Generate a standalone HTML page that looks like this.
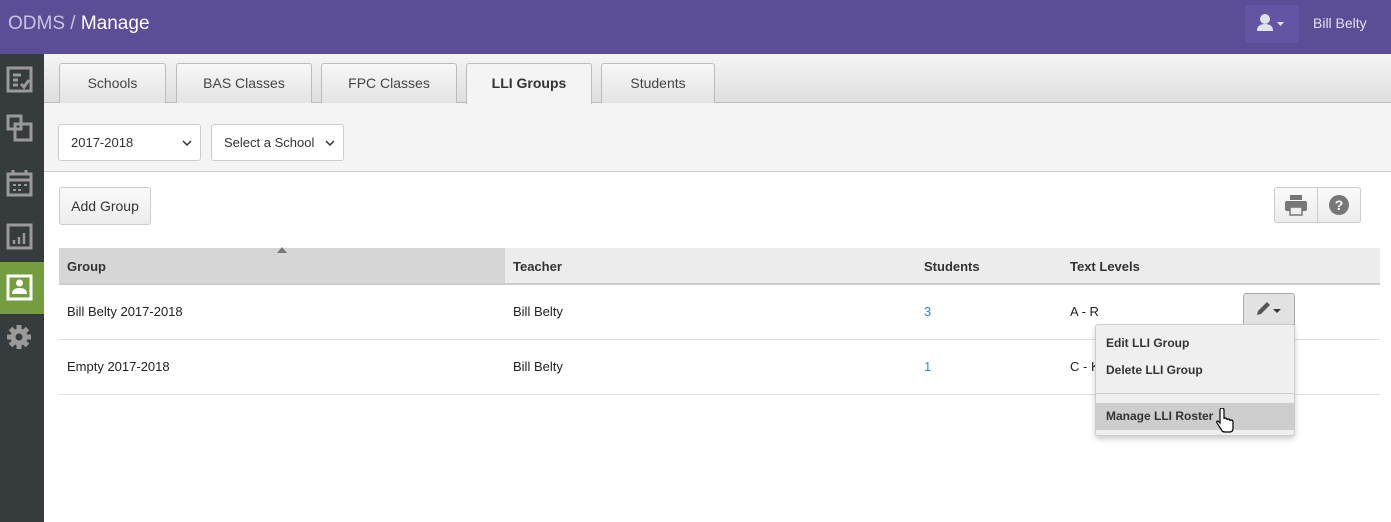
<!DOCTYPE html><html><head><style>
*{box-sizing:border-box;margin:0;padding:0}
body{width:1391px;height:522px;overflow:hidden;font-family:"Liberation Sans",sans-serif;font-size:13px;color:#222;background:#fff;position:relative}
.a{position:absolute}
.hdr{left:0;top:0;width:1391px;height:54px;background:#5b4d96}
.side{left:0;top:54px;width:44px;height:468px;background:#363b3e}
.tabbar{left:44px;top:54px;width:1347px;height:49px;background:linear-gradient(#f5f5f5,#dedede);border-bottom:1px solid #bbb}
.tab{top:63px;height:40px;border:1px solid #bbb;border-bottom:none;border-radius:3px 3px 0 0;background:linear-gradient(#f7f7f7,#e3e3e3);text-align:center;line-height:38px;font-size:14px;color:#444}
.filt{left:44px;top:103px;width:1347px;height:69px;background:#f4f4f4;border-bottom:1px solid #ccc}
.sel{top:124px;height:37px;border:1px solid #ccc;border-radius:3px;background:#fff;font-size:13px;line-height:35px;padding-left:12px;color:#333}
.chev{position:absolute;right:8px;top:14px}
.btn{border:1px solid #ccc;border-radius:3px;background:linear-gradient(#fafafa,#ececec)}
.th{top:248px;height:37px;font-weight:bold;line-height:36px;color:#333}
.td{line-height:20px}
</style></head><body>
<div class="a hdr"></div>
<div class="a" style="left:8px;top:13px;font-size:19px;color:#c9c3e0">ODMS / <span style="color:#fff">Manage</span></div>
<div class="a" style="left:1245px;top:5px;width:54px;height:38px;background:#6553a3;border-radius:3px"></div>
<svg class="a" style="left:1256px;top:13px" width="34" height="20"><circle cx="9" cy="6" r="5" fill="#dfe4ea"/><path d="M1 18 Q1 11 9 11 Q17 11 17 18Z" fill="#dfe4ea"/><path d="M21 9h7l-3.5 4z" fill="#dfe4ea"/></svg>
<div class="a" style="left:1313px;top:15px;font-size:14px;color:#e6e3f2">Bill Belty</div>
<div class="a side"></div>
<div class="a" style="left:0;top:262px;width:44px;height:52px;background:#739d3e"></div>
<svg class="a" style="left:0;top:54px" width="44" height="310" fill="none" stroke="#9a9a9a" stroke-width="3">
<rect x="8" y="14" width="23" height="23"/><path d="M13 21h8M13 26h5M13 31h5M21 30l3 3 5-7"/>
<rect x="8" y="62" width="13" height="13"/><rect x="15" y="70" width="16" height="16"/>
<rect x="8" y="120" width="23" height="21"/><path d="M8 126h23M13 116v5M26 116v5" /><path d="M13 131h3M18 131h3M24 131h3M13 136h3M18 136h3" stroke-width="2"/>
<rect x="8" y="171" width="23" height="23"/><path d="M14 190v-4M19 190v-7M24 190v-11" stroke-width="2.5"/>
<rect x="8" y="222" width="23" height="23" stroke="#fff"/><circle cx="19.5" cy="229" r="3.5" fill="#fff" stroke="none"/><path d="M12 240q0-6 7.5-6t7.5 6z" fill="#fff" stroke="none"/>
<g transform="translate(19,283)" fill="#9a9a9a" stroke="none">
<circle r="8.5"/>
<rect x="-2.5" y="-12" width="5" height="24"/>
<rect x="-2.5" y="-12" width="5" height="24" transform="rotate(45)"/>
<rect x="-2.5" y="-12" width="5" height="24" transform="rotate(90)"/>
<rect x="-2.5" y="-12" width="5" height="24" transform="rotate(135)"/>
<circle r="3.5" fill="#363b3e"/>
</g>
</svg>
<div class="a tabbar"></div>
<div class="a tab" style="left:59px;width:107px">Schools</div>
<div class="a tab" style="left:176px;width:136px">BAS Classes</div>
<div class="a tab" style="left:321px;width:136px">FPC Classes</div>
<div class="a tab" style="left:466px;width:126px;height:41px;background:#f4f4f4;font-weight:bold;color:#333;z-index:2">LLI Groups</div>
<div class="a tab" style="left:601px;width:114px">Students</div>
<div class="a filt"></div>
<div class="a sel" style="left:58px;width:143px">2017-2018<svg class="chev" width="10" height="8"><path d="M1 2l4 4 4-4" fill="none" stroke="#333" stroke-width="1.5"/></svg></div>
<div class="a sel" style="left:211px;width:133px">Select a School<svg class="chev" width="10" height="8"><path d="M1 2l4 4 4-4" fill="none" stroke="#333" stroke-width="1.5"/></svg></div>
<div class="a btn" style="left:59px;top:187px;width:92px;height:38px;line-height:36px;text-align:center;font-size:14px;color:#333">Add Group</div>
<div class="a btn" style="left:1274px;top:187px;width:87px;height:36px"></div>
<div class="a" style="left:1317px;top:188px;width:1px;height:34px;background:#ccc"></div>
<svg class="a" style="left:1284px;top:194px" width="24" height="22"><rect x="6" y="1" width="12" height="5" fill="#777"/><rect x="1" y="7" width="22" height="10" rx="2" fill="#777"/><rect x="6" y="13" width="12" height="8" fill="#eee" stroke="#777" stroke-width="1.5"/></svg>
<svg class="a" style="left:1328px;top:194px" width="22" height="22"><circle cx="11" cy="11" r="10" fill="#777"/><text x="11" y="16" font-size="14" font-weight="bold" fill="#fff" text-anchor="middle" font-family="Liberation Sans">?</text></svg>
<div class="a" style="left:59px;top:248px;width:1321px;height:37px;background:#ececec;border-bottom:2px solid #ccc"></div>
<div class="a" style="left:59px;top:248px;width:446px;height:35px;background:#d6d6d6"></div>
<div class="a" style="left:277px;top:247px;width:0;height:0;border-left:5px solid transparent;border-right:5px solid transparent;border-bottom:6px solid #777"></div>
<div class="a th" style="left:67px;top:249px">Group</div><div class="a th" style="left:513px;top:249px">Teacher</div><div class="a th" style="left:924px;top:249px">Students</div><div class="a th" style="left:1070px;top:249px">Text Levels</div>
<div class="a" style="left:59px;top:339px;width:1321px;height:1px;background:#ddd"></div>
<div class="a" style="left:59px;top:394px;width:1321px;height:1px;background:#ddd"></div>
<div class="a td" style="left:67px;top:302px">Bill Belty 2017-2018</div><div class="a td" style="left:513px;top:302px">Bill Belty</div><div class="a td" style="left:924px;top:302px;color:#2a8fc9">3</div><div class="a td" style="left:1070px;top:302px">A - R</div>
<div class="a td" style="left:67px;top:357px">Empty 2017-2018</div><div class="a td" style="left:513px;top:357px">Bill Belty</div><div class="a td" style="left:924px;top:357px;color:#2a8fc9">1</div><div class="a td" style="left:1070px;top:357px">C - K</div>
<div class="a" style="left:1243px;top:293px;width:52px;height:32px;border:1px solid #aaa;border-radius:3px 3px 0 0;background:#e2e2e2"></div>
<svg class="a" style="left:1255px;top:301px" width="30" height="16"><path d="M2 14l1-4 9-9 3 3-9 9z" fill="#555"/><path d="M18 8h8l-4 4z" fill="#333"/></svg>
<div class="a" style="left:1095px;top:324px;width:200px;height:112px;background:#efefef;border:1px solid #ccc;border-radius:3px;box-shadow:0 3px 6px rgba(0,0,0,.2)"></div>
<div class="a" style="left:1106px;top:335px;font-weight:bold;font-size:12px;color:#333;line-height:17px">Edit LLI Group</div>
<div class="a" style="left:1106px;top:362px;font-weight:bold;font-size:12px;color:#333;line-height:17px">Delete LLI Group</div>
<div class="a" style="left:1096px;top:393px;width:198px;height:1px;background:#ccc"></div>
<div class="a" style="left:1096px;top:403px;width:198px;height:27px;background:#cdcdcd"></div>
<div class="a" style="left:1106px;top:408px;font-weight:bold;font-size:12px;color:#333;line-height:17px">Manage LLI Roster</div>
<svg class="a" style="left:1215px;top:408px" width="20" height="28"><path d="M5 2v13l-2-2q-2 0-1 2l4 6q1 3 4 3h5q3 0 3-4v-6q0-2-2-2-1 0-1 1 0-2-2-2-1 0-1 1 0-2-2-2-1 0-1 1V2q0-2-2-2T5 2z" fill="#fff" stroke="#000" stroke-width="1.2"/></svg>
</body></html>
